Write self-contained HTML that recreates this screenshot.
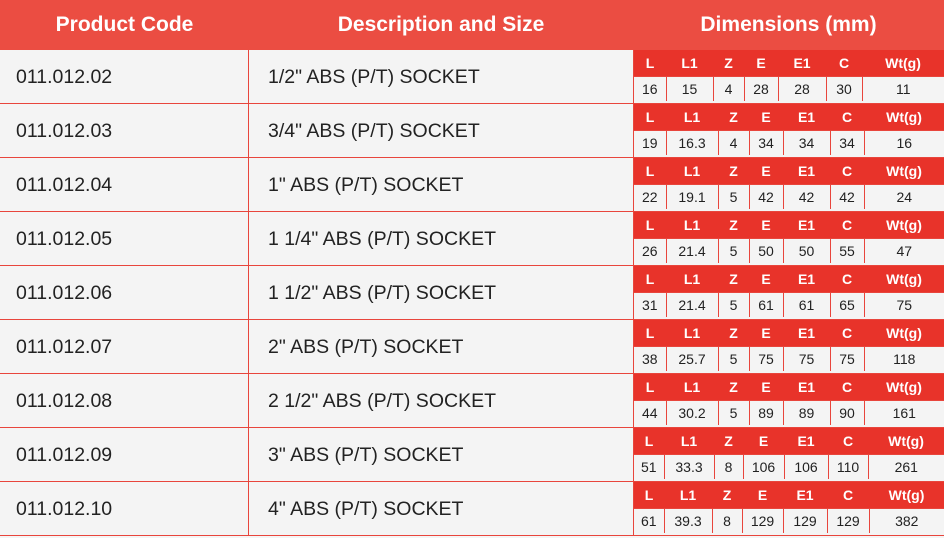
<!DOCTYPE html>
<html><head><style>
body{margin:0;width:944px;height:538px;background:#f4f4f4;font-family:"Liberation Sans",sans-serif;overflow:hidden}
.hd{display:flex;height:50px;background:#eb4d42;color:#fff;font-weight:bold;font-size:21px;align-items:center}
.hd div{text-align:center}
.row{display:flex;height:53px;border-bottom:1px solid #e8453c;background:#f4f4f4}
.c1{width:249px;border-right:1px solid #e8453c;font-size:19.5px;color:#222;padding-left:16px;box-sizing:border-box;line-height:51px;padding-top:2px}
.c2{width:384px;font-size:19.5px;color:#222;padding-left:19px;box-sizing:border-box;line-height:51px;padding-top:2px}
.c3{width:311px;border-left:1px solid #e8453c;box-sizing:border-box}
table{width:310px;border-collapse:collapse;font-size:14px;text-align:center;table-layout:fixed}
th{background:#e8332a;color:#fff;font-weight:bold;height:26px;padding:0;font-size:14px}
td{border:1px solid #e8453c;color:#222;height:24px;padding:0}
td:first-child{border-left:none}td:last-child{border-right:none}
tr:last-child td{border-bottom:none}
</style></head><body>
<div class="hd"><div style="width:249px">Product Code</div><div style="width:384px">Description and Size</div><div style="width:311px">Dimensions (mm)</div></div>
<div class="row"><div class="c1">011.012.02</div><div class="c2">1/2" ABS (P/T) SOCKET</div><div class="c3"><table><colgroup><col style="width:32px"><col style="width:47px"><col style="width:31px"><col style="width:34px"><col style="width:48px"><col style="width:36px"><col style="width:82px"></colgroup><tr><th>L</th><th>L1</th><th>Z</th><th>E</th><th>E1</th><th>C</th><th>Wt(g)</th></tr><tr><td>16</td><td>15</td><td>4</td><td>28</td><td>28</td><td>30</td><td>11</td></tr></table></div></div>
<div class="row"><div class="c1">011.012.03</div><div class="c2">3/4" ABS (P/T) SOCKET</div><div class="c3"><table><colgroup><col style="width:32px"><col style="width:52px"><col style="width:31px"><col style="width:34px"><col style="width:47px"><col style="width:34px"><col style="width:80px"></colgroup><tr><th>L</th><th>L1</th><th>Z</th><th>E</th><th>E1</th><th>C</th><th>Wt(g)</th></tr><tr><td>19</td><td>16.3</td><td>4</td><td>34</td><td>34</td><td>34</td><td>16</td></tr></table></div></div>
<div class="row"><div class="c1">011.012.04</div><div class="c2">1" ABS (P/T) SOCKET</div><div class="c3"><table><colgroup><col style="width:32px"><col style="width:52px"><col style="width:31px"><col style="width:34px"><col style="width:47px"><col style="width:34px"><col style="width:80px"></colgroup><tr><th>L</th><th>L1</th><th>Z</th><th>E</th><th>E1</th><th>C</th><th>Wt(g)</th></tr><tr><td>22</td><td>19.1</td><td>5</td><td>42</td><td>42</td><td>42</td><td>24</td></tr></table></div></div>
<div class="row"><div class="c1">011.012.05</div><div class="c2">1 1/4" ABS (P/T) SOCKET</div><div class="c3"><table><colgroup><col style="width:32px"><col style="width:52px"><col style="width:31px"><col style="width:34px"><col style="width:47px"><col style="width:34px"><col style="width:80px"></colgroup><tr><th>L</th><th>L1</th><th>Z</th><th>E</th><th>E1</th><th>C</th><th>Wt(g)</th></tr><tr><td>26</td><td>21.4</td><td>5</td><td>50</td><td>50</td><td>55</td><td>47</td></tr></table></div></div>
<div class="row"><div class="c1">011.012.06</div><div class="c2">1 1/2" ABS (P/T) SOCKET</div><div class="c3"><table><colgroup><col style="width:32px"><col style="width:52px"><col style="width:31px"><col style="width:34px"><col style="width:47px"><col style="width:34px"><col style="width:80px"></colgroup><tr><th>L</th><th>L1</th><th>Z</th><th>E</th><th>E1</th><th>C</th><th>Wt(g)</th></tr><tr><td>31</td><td>21.4</td><td>5</td><td>61</td><td>61</td><td>65</td><td>75</td></tr></table></div></div>
<div class="row"><div class="c1">011.012.07</div><div class="c2">2" ABS (P/T) SOCKET</div><div class="c3"><table><colgroup><col style="width:32px"><col style="width:52px"><col style="width:31px"><col style="width:34px"><col style="width:47px"><col style="width:34px"><col style="width:80px"></colgroup><tr><th>L</th><th>L1</th><th>Z</th><th>E</th><th>E1</th><th>C</th><th>Wt(g)</th></tr><tr><td>38</td><td>25.7</td><td>5</td><td>75</td><td>75</td><td>75</td><td>118</td></tr></table></div></div>
<div class="row"><div class="c1">011.012.08</div><div class="c2">2 1/2" ABS (P/T) SOCKET</div><div class="c3"><table><colgroup><col style="width:32px"><col style="width:52px"><col style="width:31px"><col style="width:34px"><col style="width:47px"><col style="width:34px"><col style="width:80px"></colgroup><tr><th>L</th><th>L1</th><th>Z</th><th>E</th><th>E1</th><th>C</th><th>Wt(g)</th></tr><tr><td>44</td><td>30.2</td><td>5</td><td>89</td><td>89</td><td>90</td><td>161</td></tr></table></div></div>
<div class="row"><div class="c1">011.012.09</div><div class="c2">3" ABS (P/T) SOCKET</div><div class="c3"><table><colgroup><col style="width:30px"><col style="width:50px"><col style="width:29px"><col style="width:41px"><col style="width:44px"><col style="width:40px"><col style="width:76px"></colgroup><tr><th>L</th><th>L1</th><th>Z</th><th>E</th><th>E1</th><th>C</th><th>Wt(g)</th></tr><tr><td>51</td><td>33.3</td><td>8</td><td>106</td><td>106</td><td>110</td><td>261</td></tr></table></div></div>
<div class="row"><div class="c1">011.012.10</div><div class="c2">4" ABS (P/T) SOCKET</div><div class="c3"><table><colgroup><col style="width:30px"><col style="width:48px"><col style="width:30px"><col style="width:41px"><col style="width:44px"><col style="width:42px"><col style="width:75px"></colgroup><tr><th>L</th><th>L1</th><th>Z</th><th>E</th><th>E1</th><th>C</th><th>Wt(g)</th></tr><tr><td>61</td><td>39.3</td><td>8</td><td>129</td><td>129</td><td>129</td><td>382</td></tr></table></div></div>
</body></html>
